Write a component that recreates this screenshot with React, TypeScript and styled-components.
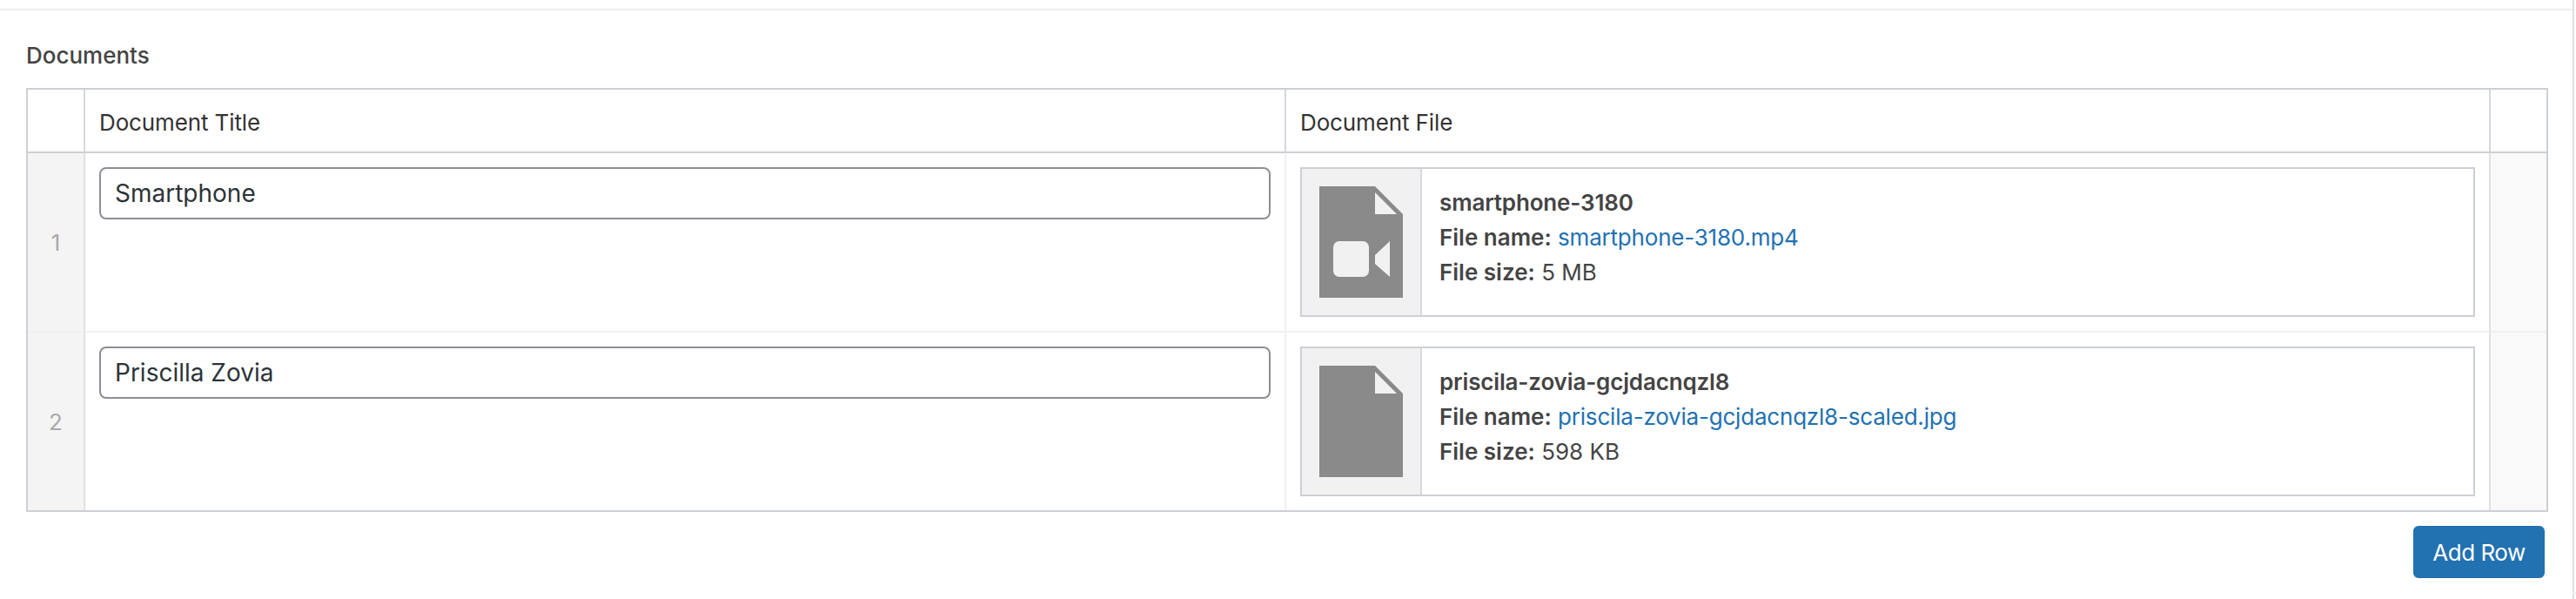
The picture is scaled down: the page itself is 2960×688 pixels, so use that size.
import React from "react";
import styled, { createGlobalStyle } from "styled-components";

const Global = createGlobalStyle`
  html, body { margin: 0; padding: 0; background: #fff; }
  body { font-family: Inter, "Liberation Sans", sans-serif; font-size: 26px; color: #444; }
`;

const Page = styled.div`
  position: relative;
  box-sizing: border-box;
  width: 2958px;
  height: 688px;
  border-right: 2px solid #e0e0e0;
`;
const SectionRule = styled.div`
  height: 10px;
  border-bottom: 2px solid #eeeef0;
`;
const FooterTick = styled.div`
  position: absolute;
  right: -4px;
  top: 680px;
  width: 4px;
  height: 2px;
  background: #f0f0f1;
`;
const Field = styled.section`
  width: 2898px;
  margin-left: 30px;
`;
const Label = styled.div`
  font-size: 26px;
  font-weight: 500;
  line-height: 36px;
  height: 36px;
  margin-top: 34px;
  margin-bottom: 19px;
`;
const Table = styled.table`
  width: 2898px;
  table-layout: fixed;
  border-collapse: separate;
  border-spacing: 0;
  border: 2px solid #ccd0d4;
`;
const HeadCell = styled.th`
  box-sizing: border-box;
  height: 73px;
  padding: 3px 16px 0;
  text-align: left;
  vertical-align: middle;
  font-weight: 400;
  font-size: 26px;
  letter-spacing: -0.12px;
  color: #333;
  background: #fff;
  border-bottom: 2px solid #ccd0d4;
  &:not(:last-child) { border-right: 2px solid #d5d8dc; }
`;
const Row = styled.tr<{ $last?: boolean }>`
  td { border-bottom: ${(p) => (p.$last ? "none" : "2px solid #f0f0f1")}; }
`;
const NumberCell = styled.td`
  box-sizing: border-box;
  text-align: center;
  vertical-align: middle;
  color: #aaa;
  font-size: 26px;
  background: #f4f4f4;
  border-right: 2px solid #e1e1e1;
`;
const ContentCell = styled.td`
  box-sizing: border-box;
  padding: 16px;
  vertical-align: top;
  background: #fff;
`;
const FileCell = styled(ContentCell)`
  border-right: 2px solid #e1e1e1;
`;
const TitleCell = styled(ContentCell)`
  border-right: 2px solid #f0f0f1;
`;
const ActionCell = styled.td`
  box-sizing: border-box;
  background: #f9f9f9;
`;
const TextInput = styled.input`
  display: block;
  box-sizing: border-box;
  width: 100%;
  height: 60px;
  padding: 0 16px;
  border: 2px solid #8c8f94;
  border-radius: 8px;
  background: #fff;
  color: #2c3338;
  font-family: Inter, "Liberation Sans", sans-serif;
  font-size: 28px;
  outline: none;
`;
const FileBox = styled.div`
  display: flex;
  box-sizing: border-box;
  height: 172px;
  border: 2px solid #ccd0d4;
`;
const Thumb = styled.div`
  flex: none;
  box-sizing: border-box;
  width: 138px;
  padding: 20px;
  background: #f1f1f1;
  border-right: 2px solid #d5d8dc;
  svg { display: block; }
`;
const FileInfo = styled.div`
  padding: 19px 20px;
  line-height: 40px;
  font-size: 26px;
`;
const FileLine = styled.div``;
const FileTitle = styled.div`
  font-weight: 600;
  letter-spacing: -0.15px;
`;
const Strong = styled.strong`
  font-weight: 600;
`;
const FileLink = styled.a`
  color: #2271b1;
  text-decoration: none;
  letter-spacing: -0.2px;
`;
const Actions = styled.div`
  display: flex;
  justify-content: flex-end;
  margin-top: 16px;
  padding-right: 4px;
`;
const AddButton = styled.button`
  box-sizing: border-box;
  height: 60px;
  width: 151px;
  padding: 0;
  border: 2px solid #2271b1;
  border-radius: 6px;
  background: #2271b1;
  color: #fff;
  font-family: Inter, "Liberation Sans", sans-serif;
  font-size: 26px;
  letter-spacing: -0.5px;
  white-space: nowrap;
`;

const FileIcon = ({ video }: { video?: boolean }) => (
  <svg width="96" height="128" viewBox="0 0 48 64">
    <path d="M0 0H32L48 16V64H0Z" fill="#8a8a8a" />
    <path d="M32 3.5L44.5 16H32Z" fill="#f1f1f1" />
    {video && (
      <>
        <rect x="8" y="31.5" width="20.5" height="20.5" rx="3.5" fill="#f1f1f1" />
        <path d="M40.5 31.5L32 39.5V44.5L40.5 52Z" fill="#f1f1f1" />
      </>
    )}
  </svg>
);

const rows = [
  { n: 1, title: "Smartphone", name: "smartphone-3180", file: "smartphone-3180.mp4", size: "5 MB", video: true, h: 206 },
  { n: 2, title: "Priscilla Zovia", name: "priscila-zovia-gcjdacnqzl8", file: "priscila-zovia-gcjdacnqzl8-scaled.jpg", size: "598 KB", video: false, h: 204 },
];

export default function App() {
  return (
    <>
      <Global />
      <Page>
        <SectionRule />
        <FooterTick />
        <Field>
          <Label>Documents</Label>
          <Table>
            <colgroup>
              <col width={66} />
              <col width={1380} />
              <col width={1384} />
              <col width={64} />
            </colgroup>
            <thead>
              <tr>
                <HeadCell />
                <HeadCell>Document Title</HeadCell>
                <HeadCell>Document File</HeadCell>
                <HeadCell />
              </tr>
            </thead>
            <tbody>
              {rows.map((r, i) => (
                <Row key={r.n} $last={i === rows.length - 1} style={{ height: r.h }}>
                  <NumberCell>{r.n}</NumberCell>
                  <TitleCell>
                    <TextInput defaultValue={r.title} />
                  </TitleCell>
                  <FileCell>
                    <FileBox>
                      <Thumb>
                        <FileIcon video={r.video} />
                      </Thumb>
                      <FileInfo>
                        <FileTitle>{r.name}</FileTitle>
                        <FileLine>
                          <Strong>File name:</Strong> <FileLink href="#">{r.file}</FileLink>
                        </FileLine>
                        <FileLine>
                          <Strong>File size:</Strong> {r.size}
                        </FileLine>
                      </FileInfo>
                    </FileBox>
                  </FileCell>
                  <ActionCell />
                </Row>
              ))}
            </tbody>
          </Table>
          <Actions>
            <AddButton>Add Row</AddButton>
          </Actions>
        </Field>
      </Page>
    </>
  );
}
